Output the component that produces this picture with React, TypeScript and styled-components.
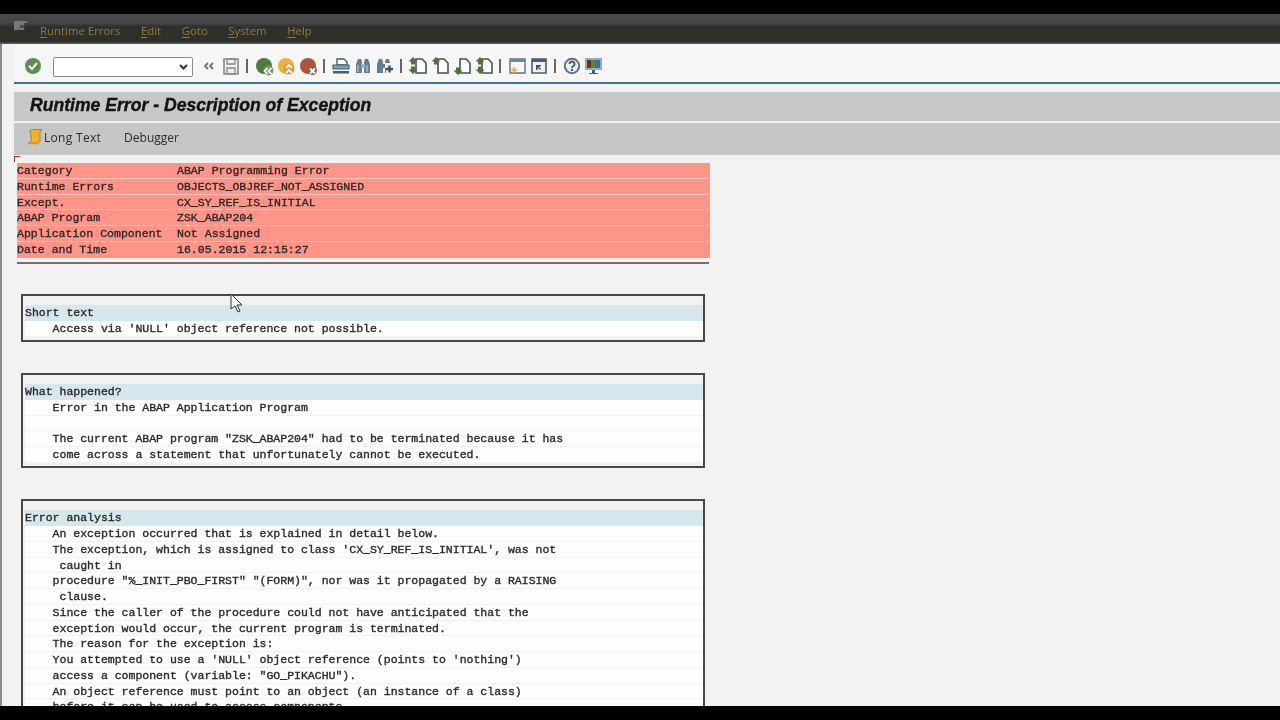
import React from 'react';
import styled, { createGlobalStyle } from 'styled-components';

const GlobalStyle = createGlobalStyle`
  html, body { margin: 0; padding: 0; background: #000; }
`;

const Screen = styled.div`
  width: 1280px;
  height: 720px;
  background: #000;
  display: flex;
  flex-direction: column;
  padding: 14px 0;
  box-sizing: border-box;
  overflow: hidden;
  position: relative;
  filter: blur(0.45px);
`;

const MenuBar = styled.div`
  height: 30px;
  flex: none;
  display: flex;
  align-items: center;
  padding: 2px 0 0 14px;
  box-sizing: border-box;
  background: linear-gradient(#4a4a4a 0, #464646 30%, #2f2f2c 42%, #2e2e2b 92%, #666 100%);
  font: 11.4px 'Open Sans', 'Liberation Sans', sans-serif;
  color: #8f7b3c;
`;

const MenuIcon = styled.svg`
  width: 13px;
  height: 11px;
  margin: -7px 13px 0 0;
`;

const MenuItem = styled.span`
  margin-right: 20.5px;
  u { text-underline-offset: 2px; }
`;

const Body = styled.div`
  flex: 1;
  min-height: 0;
  background: #f2f2f2;
  padding-left: 14px;
  overflow: hidden;
  box-shadow: inset 2px 0 0 #8a8a8a;
`;

const Toolbar = styled.div`
  height: 40px;
  box-sizing: border-box;
  display: flex;
  align-items: center;
  padding: 6px 0 0 8px;
  border-bottom: 2px solid #3b7a9e;
  background: #f6f6f6;
`;

const ToolIcon = styled.svg`
  width: 22px;
  height: 20px;
  flex: none;
`;

const Separator = styled.span`
  width: 2px;
  height: 14px;
  margin: 0 4.5px;
  background: #666;
  flex: none;
`;

const Combo = styled.div`
  width: 140px;
  height: 20px;
  box-sizing: border-box;
  margin: 1px 4.5px 0 9px;
  border: 1px solid #8c8c8c;
  border-radius: 2px;
  background: #fff;
  display: flex;
  align-items: center;
  justify-content: flex-end;
  padding-right: 4px;
  flex: none;
`;

const TitleBar = styled.div`
  margin-top: 8px;
  height: 29px;
  box-sizing: border-box;
  display: flex;
  align-items: center;
  padding: 0 0 3px 16px;
  background: #c8c8c8;
  font: italic bold 17.6px 'Liberation Sans', Arial, sans-serif;
  color: #141414;
  -webkit-text-stroke: 0.4px #141414;
`;

const ActionBar = styled.div`
  margin-top: 2px;
  height: 32px;
  box-sizing: border-box;
  display: flex;
  align-items: center;
  padding: 0 0 4px 13px;
  background: #c6c6c6;
  font: 12px 'Open Sans', 'Liberation Sans', sans-serif;
  color: #2c2c2c;
`;

const ActionButton = styled.span<{ $spacing?: number }>`
  display: flex;
  align-items: center;
  margin-right: 23px;
  letter-spacing: ${(p) => p.$spacing ?? 0}px;
`;

const CornerMark = styled.span`
  position: absolute;
  left: 14px;
  top: 156px;
  width: 5px;
  height: 5px;
  border-left: 1px solid #a33;
  border-top: 1px solid #a33;
`;

const Content = styled.div`
  padding: 8px 0 0 3px;
  font: 11.55px/15.75px 'Liberation Mono', 'Courier New', monospace;
  color: #2a2a2a;
  -webkit-text-stroke: 0.35px #2a2a2a;
  white-space: pre;
`;

const HeaderTable = styled.div`
  width: 693px;
`;

const HeaderRow = styled.div`
  display: flex;
  height: 15.75px;
  background: #ff9488;
  border-bottom: 1px solid #fbc4bc;
  box-sizing: border-box;
  &:last-child { border-bottom: 0; }
`;

const HeaderLabel = styled.span`
  width: 160px;
  flex: none;
`;

const HeaderRule = styled.div`
  width: 692px;
  height: 2px;
  margin-top: 4px;
  background: #707070;
`;

const Box = styled.div<{ $top: number }>`
  width: 684px;
  box-sizing: border-box;
  margin: ${(p) => p.$top}px 0 0 4px;
  padding: 9px 0 3px 2px;
  border: 2px solid #484848;
  background: #f2f2f2;
  letter-spacing: -0.03px;
`;

const OpenBox = styled(Box)`
  border-bottom: 0;
`;

const BoxTitle = styled.div`
  height: 16.25px;
  background: #d6e8ee;
`;

const BoxLine = styled.div`
  height: 15.75px;
  box-sizing: border-box;
  border-bottom: 1px solid #f3f3f3;
  background: #fdfdfd;
`;

const Cursor = styled.svg`
  position: absolute;
  left: 230px;
  top: 293px;
  width: 14px;
  height: 21px;
`;

const headerRows = [
  ['Category', 'ABAP Programming Error'],
  ['Runtime Errors', 'OBJECTS_OBJREF_NOT_ASSIGNED'],
  ['Except.', 'CX_SY_REF_IS_INITIAL'],
  ['ABAP Program', 'ZSK_ABAP204'],
  ['Application Component', 'Not Assigned'],
  ['Date and Time', '16.05.2015 12:15:27'],
];

const happened = [
  '    Error in the ABAP Application Program',
  '',
  '    The current ABAP program "ZSK_ABAP204" had to be terminated because it has',
  '    come across a statement that unfortunately cannot be executed.',
];

const analysis = [
  '    An exception occurred that is explained in detail below.',
  "    The exception, which is assigned to class 'CX_SY_REF_IS_INITIAL', was not",
  '     caught in',
  '    procedure "%_INIT_PBO_FIRST" "(FORM)", nor was it propagated by a RAISING',
  '     clause.',
  '    Since the caller of the procedure could not have anticipated that the',
  '    exception would occur, the current program is terminated.',
  '    The reason for the exception is:',
  "    You attempted to use a 'NULL' object reference (points to 'nothing')",
  '    access a component (variable: "GO_PIKACHU").',
  '    An object reference must point to an object (an instance of a class)',
  '    before it can be used to access components.',
];

const menus = [
  ['R', 'untime Errors'],
  ['E', 'dit'],
  ['G', 'oto'],
  ['S', 'ystem'],
  ['H', 'elp'],
];

function Icon({ children }: { children: React.ReactNode }) {
  return <ToolIcon viewBox="0 0 22 20">{children}</ToolIcon>;
}

const Doc = () => <path d="M9 3h6l4 4v10H9z" fill="#fbfbfb" stroke="#46525a" strokeWidth="1.6" />;

const Up = ({ x, y }: { x: number; y: number }) => (
  <path d={`M${x} ${y}l4.5 4.5H${x + 2}v3h-4v-3h-2.500z`} fill="#52703f" />
);

const Down = ({ x, y }: { x: number; y: number }) => (
  <path d={`M${x} ${y}l4.500-4.500H${x + 2}v-3h-4v3h-2.500z`} fill="#52703f" />
);

export default function App() {
  return (
    <Screen>
      <GlobalStyle />
      <MenuBar>
        <MenuIcon viewBox="0 0 13 11">
          <path d="M0 0h13v2H10v7H0z" fill="#77787a" />
          <path d="M6 4h6L9 7H6z" fill="#4a4a4a" />
        </MenuIcon>
        {menus.map(([first, rest]) => (
          <MenuItem key={first}>
            <u>{first}</u>
            {rest}
          </MenuItem>
        ))}
      </MenuBar>
      <Body>
        <Toolbar>
          <Icon>
            <circle cx="11" cy="10" r="8" fill="#5c8f4e" />
            <path d="M7 10l3 3 5-6" fill="none" stroke="#fff" strokeWidth="2" />
          </Icon>
          <Combo>
            <svg width="9" height="6" viewBox="0 0 9 6">
              <path d="M1 1l3.500 3.500L8 1" fill="none" stroke="#333" strokeWidth="2" />
            </svg>
          </Combo>
          <Icon>
            <path d="M10 7l-3 3 3 3M15 7l-3 3 3 3" fill="none" stroke="#6d7378" strokeWidth="1.800" />
          </Icon>
          <Icon>
            <path d="M4 3h14v15H4z" fill="#efefef" stroke="#85898c" strokeWidth="1.600" />
            <path d="M7 3h8v5H7zM7 12h8v6H7z" fill="none" stroke="#85898c" strokeWidth="1.300" />
          </Icon>
          <Separator />
          <Icon>
            <circle cx="11" cy="10" r="8" fill="#4f7b3f" />
            <circle cx="15.500" cy="14.500" r="5" fill="#7f9473" />
            <path d="M14.500 12l-3 3 3 3M18.500 12l-3 3 3 3" fill="none" stroke="#fff" strokeWidth="1.700" />
          </Icon>
          <Icon>
            <circle cx="11" cy="10" r="8" fill="#eeb13a" />
            <circle cx="14" cy="13" r="5.500" fill="#d99a45" />
            <path d="M11 12l3-3 3 3M11 17l3-3 3 3" fill="none" stroke="#fff" strokeWidth="1.800" />
          </Icon>
          <Icon>
            <circle cx="11" cy="10" r="8" fill="#a9563a" />
            <circle cx="15.500" cy="14.500" r="4.500" fill="#8d5f4e" />
            <path d="M13 12.500l5 5M18 12.500l-5 5" stroke="#fff" strokeWidth="1.900" />
          </Icon>
          <Separator />
          <Icon>
            <path d="M7 3h7l3 3v3H7z" fill="#fff" stroke="#47606f" strokeWidth="1.400" />
            <path d="M3 9h16v4H3z" fill="#7fa3bb" stroke="#47606f" strokeWidth="1.200" />
            <path d="M3 15h16v2.500H3z" fill="#47606f" />
          </Icon>
          <Icon>
            <path d="M6 3h3l1 3v11H4V8zM13 3h3l2 5v9h-6V6z" fill="#667f90" />
            <path d="M10 8h2v4h-2zM6 9v7M15 9v7" stroke="#e6ecef" strokeWidth="0.800" fill="#667f90" />
          </Icon>
          <Icon>
            <path d="M5 3h3l1 3v11H3V8zM12 3h3l1 4h-5V6z" fill="#667f90" />
            <path d="M9 8h2v4H9zM11 12h1v5h-1z" fill="#667f90" />
            <path d="M12 13h7M15.500 9.500v7" stroke="#3d5566" strokeWidth="2.400" />
          </Icon>
          <Separator />
          <Icon>
            <Doc />
            <Up x={6} y={1} />
            <Down x={6} y={18} />
          </Icon>
          <Icon>
            <Doc />
            <Up x={7} y={1} />
          </Icon>
          <Icon>
            <Doc />
            <Down x={7} y={19} />
          </Icon>
          <Icon>
            <Doc />
            <Up x={7} y={1} />
            <Down x={7} y={18} />
          </Icon>
          <Separator />
          <Icon>
            <path d="M4 3h15v14H4z" fill="#f8f8f8" stroke="#5b7486" strokeWidth="1.400" />
            <path d="M4 3h15v3H4z" fill="#6d8796" />
            <path d="M8 10l1.300 2.700L12 14l-2.700 1.300L8 18l-1.300-2.700L4 14l2.700-1.300z" fill="#f5b52e" />
          </Icon>
          <Icon>
            <path d="M4 3h14v14H4z" fill="#eef2f4" stroke="#47606f" strokeWidth="1.600" />
            <path d="M4 3h14v3H4z" fill="#47606f" />
            <path d="M8 9h5v1.500H10.500l2.500 2.500-1 1-2.500-2.500V14H8z" fill="#47505a" />
          </Icon>
          <Separator />
          <Icon>
            <circle cx="11" cy="10" r="7.200" fill="#e8ecef" stroke="#5b7486" strokeWidth="2" />
            <path d="M8.500 8a2.500 2.500 0 1 1 3.500 2.300c-.8.400-1 .8-1 1.700" fill="none" stroke="#3d5566" strokeWidth="1.800" />
            <path d="M10 13h2v2h-2z" fill="#3d5566" />
          </Icon>
          <Icon>
            <path d="M2 2h17v12H2z" fill="#8fb0c4" />
            <path d="M4 4h4v8H4z" fill="#7a2a22" />
            <path d="M8 4h4v8H8z" fill="#4f8a3e" />
            <path d="M12 4h5v8h-5z" fill="#3f6d9e" />
            <path d="M9 14h3v3h3v1H6v-1h3z" fill="#47606f" />
          </Icon>
        </Toolbar>
        <TitleBar>Runtime Error - Description of Exception</TitleBar>
        <ActionBar>
          <ActionButton $spacing={0.3}>
            <svg width="17" height="17" viewBox="0 0 17 17">
              <path d="M3 2c0-1 1-1.500 2-1.500h10c-1 .8-2 1.500-2 3v8c0 1.500-1 2.500-2 2.500H2l2-2V7C4 5 3 4 3 2z" fill="#eeb32e" stroke="#a9761a" strokeWidth="0.800" />
              <path d="M1 13.500h10v1.800H1z" fill="#d99a22" />
            </svg>
            Long Text
          </ActionButton>
          <ActionButton>Debugger</ActionButton>
        </ActionBar>
        <CornerMark />
        <Content>
          <HeaderTable>
            {headerRows.map(([label, value]) => (
              <HeaderRow key={label}>
                <HeaderLabel>{label}</HeaderLabel>
                <span>{value}</span>
              </HeaderRow>
            ))}
          </HeaderTable>
          <HeaderRule />
          <Box $top={30}>
            <BoxTitle>Short text</BoxTitle>
            <BoxLine>{"    Access via 'NULL' object reference not possible."}</BoxLine>
          </Box>
          <Box $top={31}>
            <BoxTitle>What happened?</BoxTitle>
            {happened.map((line, i) => (
              <BoxLine key={i}>{line}</BoxLine>
            ))}
          </Box>
          <OpenBox $top={31}>
            <BoxTitle>Error analysis</BoxTitle>
            {analysis.map((line, i) => (
              <BoxLine key={i}>{line}</BoxLine>
            ))}
          </OpenBox>
        </Content>
      </Body>
      <Cursor viewBox="0 0 14 21">
        <path d="M1 1v15l4-3 3 6 2-1-3-6h5z" fill="#f4f4f4" stroke="#333" strokeWidth="1" />
      </Cursor>
    </Screen>
  );
}
